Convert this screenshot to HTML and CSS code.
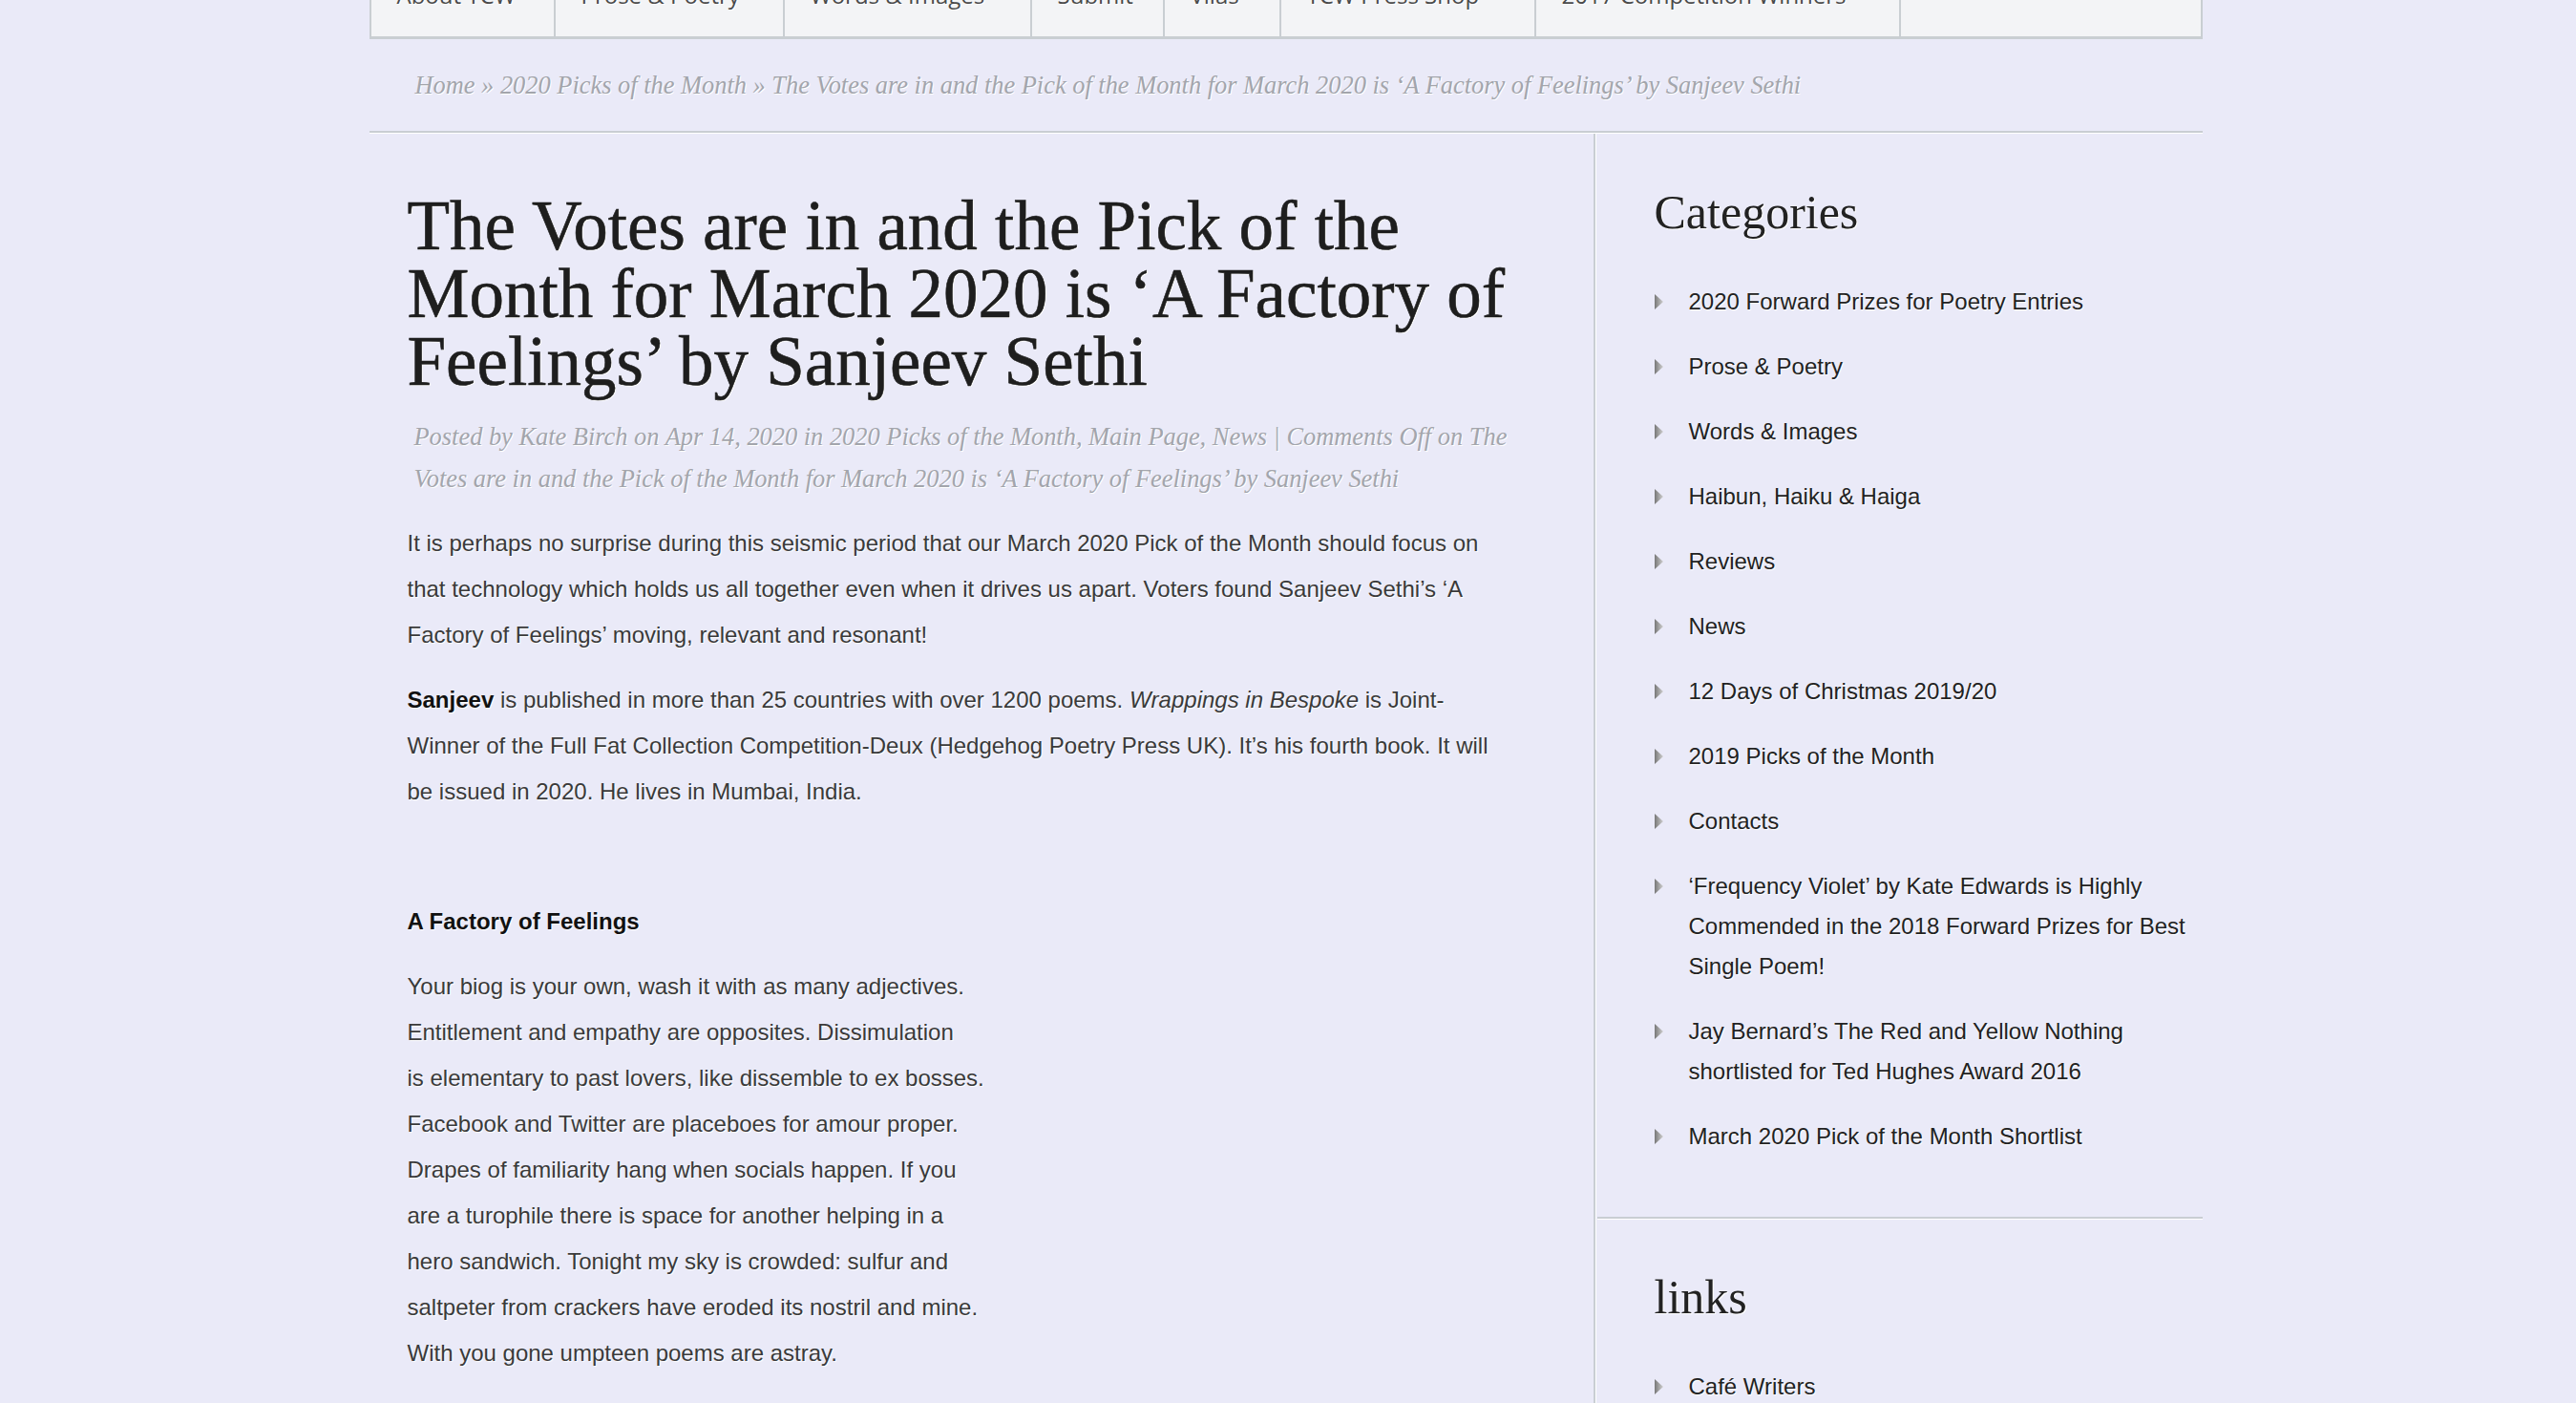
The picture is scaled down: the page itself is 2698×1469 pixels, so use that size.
FILE: index.html
```html
<!DOCTYPE html>
<html lang="en">
<head>
<meta charset="utf-8">
<title>The Votes are in and the Pick of the Month for March 2020</title>
<link rel="stylesheet" href="styles.css">
</head>
<body>
<div class="wrapper">
  <nav class="topnav">
    <ul class="menu">
      <li class="menu-item">About TCW</li>
      <li class="menu-item">Prose &amp; Poetry</li>
      <li class="menu-item">Words &amp; Images</li>
      <li class="menu-item">Submit</li>
      <li class="menu-item">Vilas</li>
      <li class="menu-item">TCW Press Shop</li>
      <li class="menu-item">2017 Competition Winners</li>
      <li class="menu-item menu-fill"></li>
    </ul>
  </nav>

  <div class="breadcrumb">Home » 2020 Picks of the Month » The Votes are in and the Pick of the Month for March 2020 is ‘A Factory of Feelings’ by Sanjeev Sethi</div>

  <div class="columns">
    <main class="main">
      <article class="post">
        <h1 class="post-title">The Votes are in and the Pick of the Month for March 2020 is ‘A Factory of Feelings’ by Sanjeev Sethi</h1>
        <p class="post-meta">Posted by Kate Birch on Apr 14, 2020 in 2020 Picks of the Month, Main Page, News | Comments Off on The Votes are in and the Pick of the Month for March 2020 is ‘A Factory of Feelings’ by Sanjeev Sethi</p>
        <div class="post-body">
          <p>It is perhaps no surprise during this seismic period that our March 2020 Pick of the Month should focus on that technology which holds us all together even when it drives us apart. Voters found Sanjeev Sethi’s ‘A Factory of Feelings’ moving, relevant and resonant!</p>
          <p><strong>Sanjeev</strong> is published in more than 25 countries with over 1200 poems. <em>Wrappings in Bespoke</em> is Joint-Winner of the Full Fat Collection Competition-Deux (Hedgehog Poetry Press UK). It’s his fourth book. It will be issued in 2020. He lives in Mumbai, India.</p>
          <p>&nbsp;</p>
          <p><strong>A Factory of Feelings</strong></p>
          <p>Your biog is your own, wash it with as many adjectives.<br>
          Entitlement and empathy are opposites. Dissimulation<br>
          is elementary to past lovers, like dissemble to ex bosses.<br>
          Facebook and Twitter are placeboes for amour proper.<br>
          Drapes of familiarity hang when socials happen. If you<br>
          are a turophile there is space for another helping in a<br>
          hero sandwich. Tonight my sky is crowded: sulfur and<br>
          saltpeter from crackers have eroded its nostril and mine.<br>
          With you gone umpteen poems are astray.</p>
        </div>
      </article>
    </main>

    <aside class="sidebar">
      <section class="widget">
        <h3 class="widget-title">Categories</h3>
        <ul class="widget-list">
          <li><svg class="bullet" width="9" height="16" viewBox="0 0 9 16"><defs><linearGradient id="g1" x1="0" y1="0" x2="1" y2="0"><stop offset="0" stop-color="#777"/><stop offset="1" stop-color="#d0d0d0"/></linearGradient></defs><polygon points="0,0 9,8 0,16" fill="url(#g1)"/></svg><span>2020 Forward Prizes for Poetry Entries</span></li>
          <li><svg class="bullet" width="9" height="16" viewBox="0 0 9 16"><polygon points="0,0 9,8 0,16" fill="url(#g1)"/></svg><span>Prose &amp; Poetry</span></li>
          <li><svg class="bullet" width="9" height="16" viewBox="0 0 9 16"><polygon points="0,0 9,8 0,16" fill="url(#g1)"/></svg><span>Words &amp; Images</span></li>
          <li><svg class="bullet" width="9" height="16" viewBox="0 0 9 16"><polygon points="0,0 9,8 0,16" fill="url(#g1)"/></svg><span>Haibun, Haiku &amp; Haiga</span></li>
          <li><svg class="bullet" width="9" height="16" viewBox="0 0 9 16"><polygon points="0,0 9,8 0,16" fill="url(#g1)"/></svg><span>Reviews</span></li>
          <li><svg class="bullet" width="9" height="16" viewBox="0 0 9 16"><polygon points="0,0 9,8 0,16" fill="url(#g1)"/></svg><span>News</span></li>
          <li><svg class="bullet" width="9" height="16" viewBox="0 0 9 16"><polygon points="0,0 9,8 0,16" fill="url(#g1)"/></svg><span>12 Days of Christmas 2019/20</span></li>
          <li><svg class="bullet" width="9" height="16" viewBox="0 0 9 16"><polygon points="0,0 9,8 0,16" fill="url(#g1)"/></svg><span>2019 Picks of the Month</span></li>
          <li><svg class="bullet" width="9" height="16" viewBox="0 0 9 16"><polygon points="0,0 9,8 0,16" fill="url(#g1)"/></svg><span>Contacts</span></li>
          <li><svg class="bullet" width="9" height="16" viewBox="0 0 9 16"><polygon points="0,0 9,8 0,16" fill="url(#g1)"/></svg><span>‘Frequency Violet’ by Kate Edwards is Highly Commended in the 2018 Forward Prizes for Best Single Poem!</span></li>
          <li><svg class="bullet" width="9" height="16" viewBox="0 0 9 16"><polygon points="0,0 9,8 0,16" fill="url(#g1)"/></svg><span>Jay Bernard’s The Red and Yellow Nothing shortlisted for Ted Hughes Award 2016</span></li>
          <li><svg class="bullet" width="9" height="16" viewBox="0 0 9 16"><polygon points="0,0 9,8 0,16" fill="url(#g1)"/></svg><span>March 2020 Pick of the Month Shortlist</span></li>
        </ul>
      </section>
      <section class="widget widget-links">
        <h3 class="widget-title">links</h3>
        <ul class="widget-list">
          <li><svg class="bullet" width="9" height="16" viewBox="0 0 9 16"><polygon points="0,0 9,8 0,16" fill="url(#g1)"/></svg><span>Café Writers</span></li>
          <li><svg class="bullet" width="9" height="16" viewBox="0 0 9 16"><polygon points="0,0 9,8 0,16" fill="url(#g1)"/></svg><span>Poetry Society</span></li>
        </ul>
      </section>
    </aside>
  </div>
</div>
</body>
</html>
```

FILE: styles.css
```css
html, body {
  margin: 0;
  padding: 0;
}

body {
  background: #eaeaf8;
  font-family: "Liberation Sans", Arial, sans-serif;
  color: #3a3a3a;
  padding-right: 5px;
}

.wrapper {
  width: 1920px;
  margin: -52px auto 0;
}

/* ---------- top navigation ---------- */
.menu {
  display: flex;
  list-style: none;
  margin: 0;
  padding: 0;
  height: 93px;
  box-sizing: border-box;
  background: #f3f4f6;
  border: 2px solid #c9ced2;
  border-bottom-width: 3px;
  overflow: hidden;
}

.menu-item {
  box-sizing: border-box;
  padding: 30px 0 0 27px;
  font-family: "Open Sans", "DejaVu Sans", sans-serif;
  font-size: 24px;
  line-height: 30px;
  color: #4a4a4a;
  white-space: nowrap;
  border-right: 2px solid #c9ced2;
  text-shadow: 1px 1px 0 #fff;
}

.menu-item:nth-child(1) { width: 193px; }
.menu-item:nth-child(2) { width: 240px; }
.menu-item:nth-child(3) { width: 259px; }
.menu-item:nth-child(4) { width: 139px; }
.menu-item:nth-child(5) { width: 122px; }
.menu-item:nth-child(6) { width: 267px; }
.menu-item:nth-child(7) { width: 382px; }

.menu-fill {
  flex: 1;
  border-right: 0;
}

/* ---------- breadcrumb ---------- */
.breadcrumb {
  height: 98px;
  box-sizing: border-box;
  padding: 0 0 0 48px;
  display: flex;
  align-items: center;
  font-family: "Liberation Serif", "Times New Roman", serif;
  font-style: italic;
  font-size: 26.4px;
  color: #a3a5ac;
  text-shadow: 1px 1px 0 #fff;
  border-bottom: 2px solid #c9ced3;
  box-shadow: 0 1px 0 #fff;
}

/* ---------- columns ---------- */
.columns {
  display: grid;
  grid-template-columns: 1282px 1fr;
  margin-top: 1px;
}

.main {
  padding: 61px 0 0 40px;
}

.post {
  width: 1158px;
}

.post-title {
  margin: 0;
  font-family: "Liberation Serif", "Times New Roman", serif;
  font-weight: normal;
  font-size: 73px;
  line-height: 71px;
  color: #1e1e1e;
  text-shadow: 1px 1px 0 #fff;
  -webkit-text-stroke: 0.6px #1e1e1e;
}

.post-meta {
  margin: 21px 0 22px;
  padding-left: 7px;
  font-family: "Liberation Serif", "Times New Roman", serif;
  font-style: italic;
  font-size: 26.4px;
  line-height: 44px;
  color: #a3a5ac;
  text-shadow: 1px 1px 0 #fff;
}

.post-body p {
  margin: 0 0 20px;
  font-size: 24px;
  line-height: 48px;
  color: #3a3a3a;
  text-shadow: 1px 1px 1px #fff;
}

.post-body strong {
  color: #111;
}

/* ---------- sidebar ---------- */
.sidebar {
  border-left: 2px solid #c9ced3;
  box-shadow: inset 1px 0 0 #fff;
}

.widget {
  padding: 52px 12px 37px 62px;
}

.widget-links {
  border-top: 2px solid #c9ced3;
  box-shadow: inset 0 1px 0 #fff;
  margin-left: 2px;
  padding-left: 60px;
}

.widget-title {
  margin: 0 0 43px;
  font-family: "Liberation Serif", "Times New Roman", serif;
  font-weight: normal;
  font-size: 50px;
  line-height: 60px;
  color: #222;
  text-shadow: 1px 1px 0 #fff;
}

.widget-list {
  list-style: none;
  margin: 0;
  padding: 0;
}

.widget-list li {
  display: flex;
  align-items: flex-start;
  gap: 27px;
  margin: 0 0 26px;
  font-size: 24px;
  line-height: 42px;
  color: #222;
  text-shadow: 1px 1px 1px #fff;
}

.bullet {
  flex: none;
  margin-top: 13px;
}
```
